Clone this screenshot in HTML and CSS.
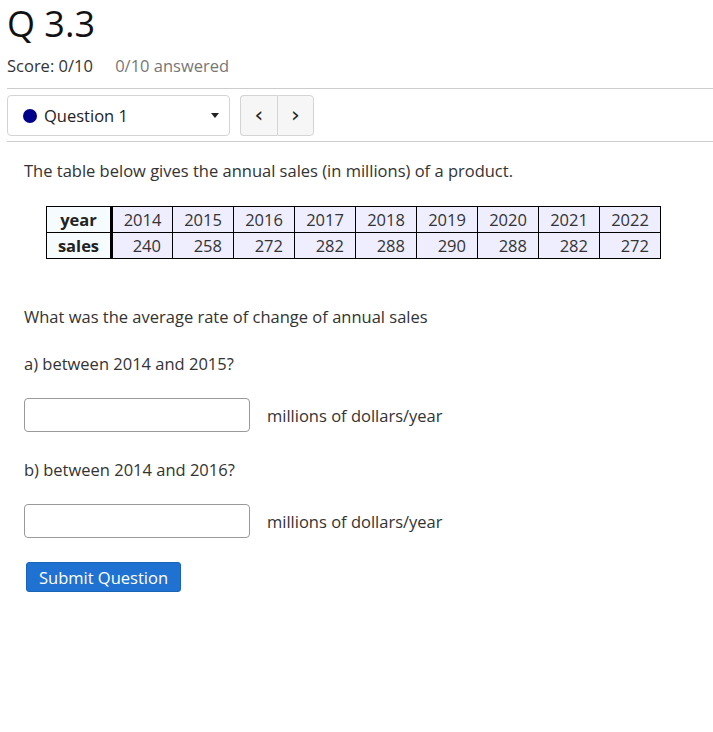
FILE: index.html
```html
<!DOCTYPE html>
<html lang="en">
<head>
  <meta charset="UTF-8" />
  <title>Q 3.3</title>
  <link rel="stylesheet" href="styles.css">
</head>
<body>
  <h1>Q 3.3</h1>
  <div class="score">
    <span>Score: 0/10</span>
    <span class="answered">0/10 answered</span>
  </div>
  <div class="navbar">
    <div class="qselect">
      <span class="dot"></span>
      <span class="qlabel">Question 1</span>
      <span class="caret"></span>
    </div>
    <div class="navbtns">
      <button class="nav-btn">&#8249;</button>
      <button class="nav-btn">&#8250;</button>
    </div>
  </div>

  <div class="question">
    <p class="intro">The table below gives the annual sales (in millions) of a product.</p>
    <table class="data">
      <tr>
        <th>year</th>
        <td class="c">2014</td><td class="c">2015</td><td class="c">2016</td><td class="c">2017</td><td class="c">2018</td><td class="c">2019</td><td class="c">2020</td><td class="c">2021</td><td class="c">2022</td>
      </tr>
      <tr>
        <th>sales</th>
        <td>240</td><td>258</td><td>272</td><td>282</td><td>288</td><td>290</td><td>288</td><td>282</td><td>272</td>
      </tr>
    </table>

    <p class="ask">What was the average rate of change of annual sales</p>
    <p>a) between 2014 and 2015?</p>
    <div class="answer">
      <input type="text"> <span>millions of dollars/year</span>
    </div>
    <p>b) between 2014 and 2016?</p>
    <div class="answer">
      <input type="text"> <span>millions of dollars/year</span>
    </div>
    <button class="submit">Submit Question</button>
  </div>
</body>
</html>
```

FILE: styles.css
```css
body { font-family: "Open Sans", sans-serif; color:#333; margin:0; padding:0 0 0 7px; font-size:16.5px; }
h1 { font-size:36px; font-weight:400; color:#111; margin:0; padding-top:1px; line-height:46px; }
.score { margin-top:7px; line-height:24px; }
.answered { color:#777; margin-left:18px; }
.navbar { border-top:1px solid #ccc; border-bottom:1px solid #ccc; margin-top:10px; padding:6px 0 5px; display:flex; gap:10px; }
.qselect { border:1px solid #d4d4d4; border-radius:4px; display:flex; align-items:center; padding:0 0 0 15px; box-sizing:border-box; width:223px; height:41px; }
.dot { width:14px; height:14px; border-radius:50%; background:#00008b; margin-right:7px; }
.qlabel { flex:1; color:#222; }
.caret { width:0; height:0; border-left:4px solid transparent; border-right:4px solid transparent; border-top:5px solid #222; margin-right:10px; }
.navbtns { display:flex; }
.nav-btn { width:37px; height:41px; background:#f6f6f6; border:1px solid #d4d4d4; font-size:22px; color:#222; padding:0 0 3px; font-family:"DejaVu Sans", sans-serif; }
.nav-btn:first-child { border-radius:4px 0 0 4px; border-right:none; }
.nav-btn:last-child { border-radius:0 4px 4px 0; }
.question { padding:17px 17px; }
p { margin:0 0 27px; line-height:24px; }
.intro { margin-bottom:23px; }
.data { border-collapse:collapse; margin:0 0 46px 22px; }
.data th, .data td { border:1px solid #000; padding:0; height:25px; line-height:24px; }
.data th { background:#f6fcfd; font-weight:700; color:#222; width:63px; border-right:3px solid #000; }
.data td { background:#eeeeff; text-align:right; color:#333; width:61px; padding-right:11px; box-sizing:border-box; }
.data td.c { text-align:center; padding:0; }
.ask { margin-bottom:23px; }
.answer { display:flex; align-items:center; gap:17px; margin:-5px 0 26px; }
.answer input { width:226px; height:34px; box-sizing:border-box; border:1px solid #999; border-radius:4px; }
.submit { background:#1f72d2; color:#fff; border:1px solid #1a64b8; border-radius:3px; font-family:"Open Sans", sans-serif; font-size:16.5px; padding:0 12px; margin:-2px 0 0 2px; height:30px; }
```
